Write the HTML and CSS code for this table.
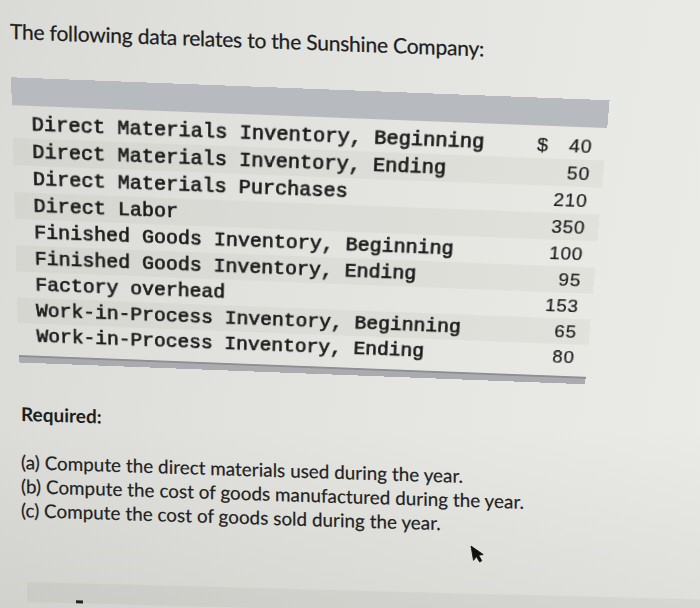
FILE: index.html
```html
<!DOCTYPE html>
<html lang="en">
<head>
<meta charset="utf-8">
<title>Sunshine Company</title>
<link rel="stylesheet" href="styles.css">
</head>
<body>
<main class="page">
  <h1 class="intro">The following data relates to the Sunshine Company:</h1>

  <section class="table">
    <div class="table-head"></div>
    <div class="rows">
      <div class="row"><span class="label">Direct Materials Inventory, Beginning</span><span class="value"><span class="cur">$</span><span>40</span></span></div>
      <div class="row alt"><span class="label">Direct Materials Inventory, Ending</span><span class="value"><span>50</span></span></div>
      <div class="row"><span class="label">Direct Materials Purchases</span><span class="value"><span>210</span></span></div>
      <div class="row alt"><span class="label">Direct Labor</span><span class="value"><span>350</span></span></div>
      <div class="row"><span class="label">Finished Goods Inventory, Beginning</span><span class="value"><span>100</span></span></div>
      <div class="row alt"><span class="label">Finished Goods Inventory, Ending</span><span class="value"><span>95</span></span></div>
      <div class="row"><span class="label">Factory overhead</span><span class="value"><span>153</span></span></div>
      <div class="row alt"><span class="label">Work-in-Process Inventory, Beginning</span><span class="value"><span>65</span></span></div>
      <div class="row"><span class="label">Work-in-Process Inventory, Ending</span><span class="value"><span>80</span></span></div>
    </div>
    <div class="table-foot"></div>
  </section>

  <section class="required">
    <h2 class="req-title">Required:</h2>
    <ol class="tasks">
      <li>(a) Compute the direct materials used during the year.</li>
      <li>(b) Compute the cost of goods manufactured during the year.</li>
      <li>(c) Compute the cost of goods sold during the year.</li>
    </ol>
  </section>

  <div class="next-box"><span class="next-mark"></span></div>
</main>

<svg class="cursor" width="14" height="20" viewBox="0 0 14 20" aria-hidden="true">
  <path d="M1.5 1 L1.5 15.5 L5 12.3 L7.3 18.2 L9.6 17.2 L7.3 11.4 L12 11.4 Z" fill="#111" stroke="#111" stroke-width="0.8" stroke-linejoin="round"/>
</svg>
</body>
</html>
```

FILE: styles.css
```css
html, body {
  margin: 0;
  padding: 0;
}

body {
  width: 700px;
  height: 608px;
  overflow: hidden;
  position: relative;
  background:
    linear-gradient(180deg, rgba(0,0,0,0) 0%, rgba(0,0,0,0) 70%, rgba(60,60,50,0.07) 100%),
    linear-gradient(100deg, #dadad6 0%, #e1e1dd 35%, #e7e7e3 70%, #ebebe8 100%);
  color: #1e1e1e;
  font-family: "Lato", "Open Sans", sans-serif;
}

.page {
  display: flex;
  flex-direction: column;
}

.intro {
  margin: 18px 0 0 10px;
  font-size: 21px;
  font-weight: 400;
  line-height: normal;
  letter-spacing: -0.2px;
  -webkit-text-stroke: 0.25px #1e1e1e;
  transform: skewY(2.1deg);
  transform-origin: 0 50%;
}

.table {
  margin: 47px 0 0 15px;
  width: 582px;
  display: flex;
  flex-direction: column;
  transform: skewY(2.2deg) skewX(-1.7deg) perspective(1000px) rotateX(-11deg);
  transform-origin: 50% 50%;
}

.table-head {
  height: 27px;
  background: #b7babe;
}

.rows {
  display: flex;
  flex-direction: column;
  padding: 5px 0 7px;
}

.row {
  display: flex;
  justify-content: space-between;
  height: 27px;
  line-height: 27px;
  padding: 0 13px 0 19px;
  font-family: "Liberation Mono", "Courier New", monospace;
  font-size: 20px;
  font-weight: 400;
  -webkit-text-stroke: 0.7px #1c1c1c;
  color: #1c1c1c;
}

.row.alt {
  background: rgba(120, 120, 110, 0.06);
}

.value {
  width: 54px;
  display: flex;
  justify-content: flex-end;
  font-family: "Liberation Sans", Arial, sans-serif;
  font-size: 19px;
  letter-spacing: 0.8px;
  -webkit-text-stroke: 0.2px #1c1c1c;
}

.value .cur {
  margin-right: auto;
}

.table-foot {
  height: 8px;
  background: #a9abaf;
  border-top: 2px solid #8d8f93;
  box-sizing: border-box;
}

.required {
  margin: 22px 0 0 21px;
  transform: skewY(1.8deg);
  transform-origin: 0 50%;
}

.req-title {
  margin: 0;
  font-size: 19px;
  font-weight: 700;
  line-height: normal;
}

.tasks {
  list-style: none;
  margin: 25px 0 0;
  padding: 0;
  font-size: 18.8px;
  line-height: 24px;
  letter-spacing: 0.05px;
  -webkit-text-stroke: 0.2px #222;
  color: #222;
}

.next-box {
  margin: 60px 0 0 27px;
  height: 20px;
  background: rgba(120, 120, 115, 0.08);
  transform: skewY(1.5deg);
  transform-origin: 0 0;
  position: relative;
}

.next-mark {
  position: absolute;
  left: 49px;
  top: 17px;
  width: 7px;
  height: 3px;
  background: #222;
}

.cursor {
  position: absolute;
  left: 471px;
  top: 544px;
  transform: rotate(-10deg);
}
```
